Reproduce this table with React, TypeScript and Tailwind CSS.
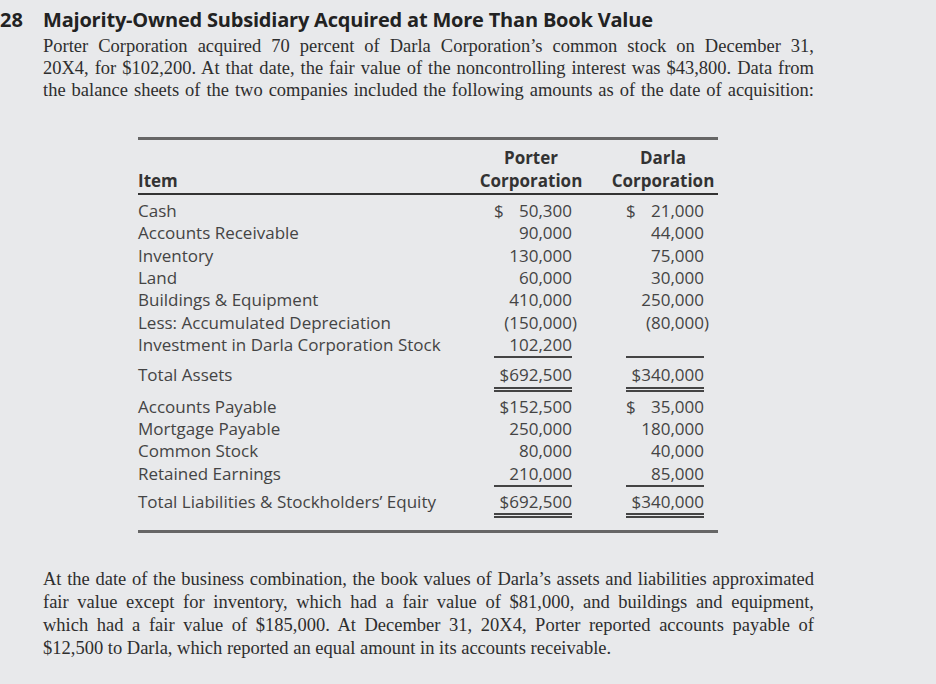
const serif = "font-['Liberation_Serif','Times_New_Roman',serif]";
const sans = "font-['Open_Sans','Liberation_Sans',sans-serif]";

type Cell = { d?: boolean; v: string; neg?: boolean; rule?: "single" | "double" };
type Row = { item: string; porter: Cell; darla: Cell };

const NumCell = ({ c }: { c: Cell }) => {
  const border =
    c.rule === "single"
      ? "border-b-2 border-[#444]"
      : c.rule === "double"
        ? "border-b-[5px] border-double border-[#444]"
        : "";
  return (
    <div className={`ml-auto mr-[14px] flex w-[78px] justify-between ${border}`}>
      <span>{c.d ? "$" : ""}</span>
      <span className={c.neg ? "-mr-[5px]" : ""}>{c.v}</span>
    </div>
  );
};

const assets: Row[] = [
  { item: "Cash", porter: { d: true, v: "50,300" }, darla: { d: true, v: "21,000" } },
  { item: "Accounts Receivable", porter: { v: "90,000" }, darla: { v: "44,000" } },
  { item: "Inventory", porter: { v: "130,000" }, darla: { v: "75,000" } },
  { item: "Land", porter: { v: "60,000" }, darla: { v: "30,000" } },
  { item: "Buildings & Equipment", porter: { v: "410,000" }, darla: { v: "250,000" } },
  { item: "Less: Accumulated Depreciation", porter: { v: "(150,000)", neg: true }, darla: { v: "(80,000)", neg: true } },
  {
    item: "Investment in Darla Corporation Stock",
    porter: { v: "102,200", rule: "single" },
    darla: { v: "\u00a0", rule: "single" },
  },
];

const liabilities: Row[] = [
  { item: "Accounts Payable", porter: { v: "$152,500" }, darla: { d: true, v: "35,000" } },
  { item: "Mortgage Payable", porter: { v: "250,000" }, darla: { v: "180,000" } },
  { item: "Common Stock", porter: { v: "80,000" }, darla: { v: "40,000" } },
  {
    item: "Retained Earnings",
    porter: { v: "210,000", rule: "single" },
    darla: { v: "85,000", rule: "single" },
  },
];

const grid = "grid grid-cols-[316px_110px_110px] gap-x-[22px] leading-[22.33px]";

const Rows = ({ rows }: { rows: Row[] }) => (
  <>
    {rows.map((r) => (
      <div key={r.item} className="contents">
        <div className="whitespace-nowrap">{r.item}</div>
        <NumCell c={r.porter} />
        <NumCell c={r.darla} />
      </div>
    ))}
  </>
);

// justified line; last line of a paragraph is left ragged
const Line = ({ text, last }: { text: string; last?: boolean }) => (
  <div className={`whitespace-nowrap ${last ? "" : "text-justify [text-align-last:justify]"}`}>{text}</div>
);

export default function App() {
  return (
    <div className="h-[684px] w-[936px] overflow-hidden bg-[#e8e9eb] text-[#333]">
      {/* Heading */}
      <div className={`flex items-baseline pt-[7px] ${sans} text-[20px] font-bold leading-[26px] text-[#222]`}>
        <span className="w-[43px]">28</span>
        <span className="tracking-[-0.2px]">Majority-Owned Subsidiary Acquired at More Than Book Value</span>
      </div>

      <div className={`ml-[43px] mt-[2px] w-[771px] ${serif} text-[18.5px] leading-[22px] text-[#2e2e2e]`}>
        <Line text="Porter Corporation acquired 70 percent of Darla Corporation’s common stock on December 31," />
        <Line text="20X4, for $102,200. At that date, the fair value of the noncontrolling interest was $43,800. Data from" />
        <Line text="the balance sheets of the two companies included the following amounts as of the date of acquisition:" />
      </div>

      {/* Table */}
      <div className={`ml-[138px] mt-[36px] w-[580px] ${sans} text-[17px] text-[#444]`}>
        <div className="h-[3px] bg-[#666]" />
        <div className="grid grid-cols-[316px_110px_110px] gap-x-[22px] pb-[1px] pt-[6px] font-bold leading-[23px] text-[#333]">
          <div className="self-end">Item</div>
          <div className="text-center">
            Porter
            <br />
            Corporation
          </div>
          <div className="text-center">
            Darla
            <br />
            Corporation
          </div>
        </div>
        <div className="h-[2px] bg-[#333]" />

        <div className={`${grid} pt-[5px]`}>
          <Rows rows={assets} />
        </div>

        <div className={`${grid} pt-[6px]`}>
          <Rows
            rows={[
              {
                item: "Total Assets",
                porter: { v: "$692,500", rule: "double" },
                darla: { v: "$340,000", rule: "double" },
              },
            ]}
          />
        </div>

        <div className={`${grid} pt-[4px]`}>
          <Rows rows={liabilities} />
        </div>

        <div className={`${grid} pt-[4px]`}>
          <Rows
            rows={[
              {
                item: "Total Liabilities & Stockholders’ Equity",
                porter: { v: "$692,500", rule: "double" },
                darla: { v: "$340,000", rule: "double" },
              },
            ]}
          />
        </div>

        <div className="mt-[12px] h-[3px] bg-[#666]" />
      </div>

      <div className={`ml-[43px] mt-[35px] w-[771px] ${serif} text-[18.5px] leading-[23px] text-[#2e2e2e]`}>
        <Line text="At the date of the business combination, the book values of Darla’s assets and liabilities approximated" />
        <Line text="fair value except for inventory, which had a fair value of $81,000, and buildings and equipment," />
        <Line text="which had a fair value of $185,000. At December 31, 20X4, Porter reported accounts payable of" />
        <Line text="$12,500 to Darla, which reported an equal amount in its accounts receivable." last />
      </div>
    </div>
  );
}
